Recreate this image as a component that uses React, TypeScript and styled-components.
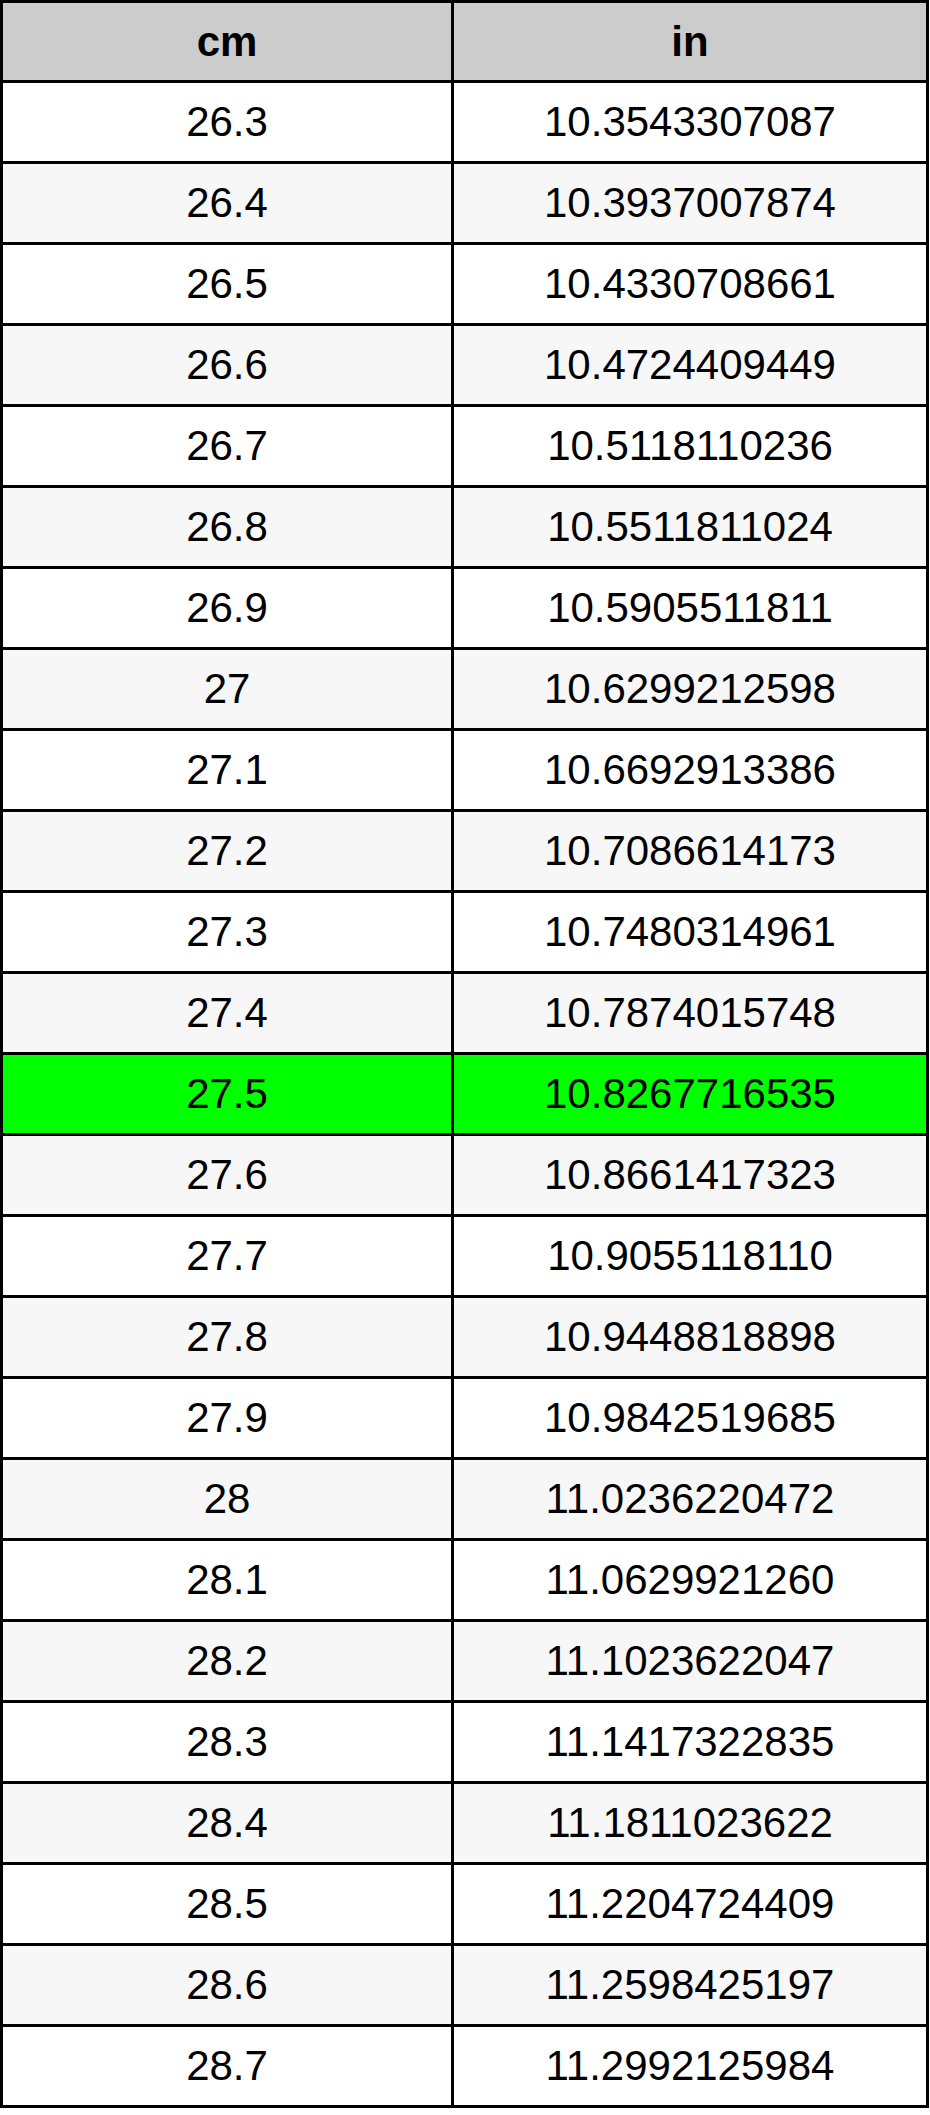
import styled, { createGlobalStyle } from "styled-components";

const GlobalStyle = createGlobalStyle`
  html, body {
    margin: 0;
    padding: 0;
    background: #ffffff;
  }
  body {
    font-family: "Liberation Sans", Arial, Helvetica, sans-serif;
  }
`;

const rows: [string, string][] = [
  ["26.3", "10.3543307087"],
  ["26.4", "10.3937007874"],
  ["26.5", "10.4330708661"],
  ["26.6", "10.4724409449"],
  ["26.7", "10.5118110236"],
  ["26.8", "10.5511811024"],
  ["26.9", "10.5905511811"],
  ["27", "10.6299212598"],
  ["27.1", "10.6692913386"],
  ["27.2", "10.7086614173"],
  ["27.3", "10.7480314961"],
  ["27.4", "10.7874015748"],
  ["27.5", "10.8267716535"],
  ["27.6", "10.8661417323"],
  ["27.7", "10.9055118110"],
  ["27.8", "10.9448818898"],
  ["27.9", "10.9842519685"],
  ["28", "11.0236220472"],
  ["28.1", "11.0629921260"],
  ["28.2", "11.1023622047"],
  ["28.3", "11.1417322835"],
  ["28.4", "11.1811023622"],
  ["28.5", "11.2204724409"],
  ["28.6", "11.2598425197"],
  ["28.7", "11.2992125984"],
];

const Table = styled.div`
  width: 929px;
  box-sizing: border-box;
  border: 3px solid #000;
  display: flex;
  flex-direction: column;
`;

const Row = styled.div<{ $bg: string; $header?: boolean }>`
  display: grid;
  grid-template-columns: 451px 1fr;
  height: ${(p) => (p.$header ? "77px" : "81px")};
  box-sizing: border-box;
  border-top: ${(p) => (p.$header ? "none" : "3px solid #000")};
  background: ${(p) => p.$bg};
`;

const Cell = styled.div<{ $bold?: boolean }>`
  display: flex;
  align-items: center;
  justify-content: center;
  box-sizing: border-box;
  font-size: 42px;
  font-weight: ${(p) => (p.$bold ? 700 : 400)};
  color: #000;
  &:first-child {
    border-right: 3px solid #000;
  }
`;

const App = () => {
  return (
    <>
      <GlobalStyle />
      <Table>
        <Row $bg="#cccccc" $header>
          <Cell $bold>cm</Cell>
          <Cell $bold>in</Cell>
        </Row>
        {rows.map(([cm, inch], i) => {
          const bg = cm === "27.5" ? "#00ff00" : i % 2 === 1 ? "#f7f7f7" : "#ffffff";
          return (
            <Row key={cm} $bg={bg}>
              <Cell>{cm}</Cell>
              <Cell>{inch}</Cell>
            </Row>
          );
        })}
      </Table>
    </>
  );
};

export default App;
